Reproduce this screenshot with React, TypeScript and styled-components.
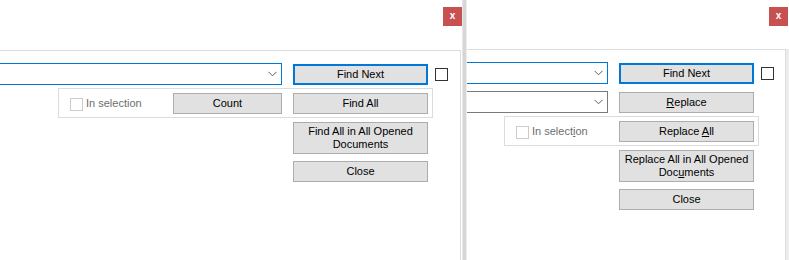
import React from "react";
import styled, { createGlobalStyle, css } from "styled-components";

const GlobalStyle = createGlobalStyle`
  html, body { margin: 0; padding: 0; background: #ffffff; }
  body {
    font-family: "Liberation Sans", Arial, sans-serif;
    font-size: 11px;
    color: #000;
  }
`;

const Page = styled.div`
  display: flex;
  width: 789px;
  height: 260px;
  background: #fff;
  overflow: hidden;
`;

const Panel = styled.div<{ $w?: number }>`
  display: flex;
  flex-direction: column;
  ${(p) => (p.$w ? css`width: ${p.$w}px; flex-shrink: 0;` : css`flex: 1; min-width: 0;`)}
  height: 100%;
`;

const TitleRow = styled.div<{ $h: number; $pr: number }>`
  height: ${(p) => p.$h}px;
  flex-shrink: 0;
  display: flex;
  justify-content: flex-end;
  align-items: flex-start;
  padding-right: ${(p) => p.$pr}px;
`;

const CloseX = styled.div`
  width: 19px;
  height: 19px;
  margin-top: 7px;
  background: #c75050;
  color: #fff;
  font-weight: bold;
  font-size: 10px;
  line-height: 18px;
  text-align: center;
`;

const Separator = styled.div`
  width: 5px;
  flex-shrink: 0;
  height: 100%;
  background: linear-gradient(
    to right,
    #e6e6e6 0 1px,
    #d6d6d6 1px 4px,
    #ececec 4px 5px
  );
`;

const Body = styled.div`
  flex: 1;
  display: flex;
  min-height: 0;
`;

const Strip = styled.div`
  width: 3px;
  flex-shrink: 0;
  background: #ececec;
`;

const Group = styled.div<{ $pr: number; $mr?: number }>`
  flex: 1;
  min-width: 0;
  display: flex;
  flex-direction: column;
  border-top: 1px solid #dcdcdc;
  border-right: 1px solid #dcdcdc;
  margin-right: ${(p) => p.$mr ?? 0}px;
  padding: 12px ${(p) => p.$pr}px 0 0;
  overflow: hidden;
`;

const Row = styled.div<{ $mt?: number }>`
  display: flex;
  align-items: flex-start;
  margin-top: ${(p) => p.$mt ?? 0}px;
`;

const Combo = styled.div<{ $active?: boolean }>`
  flex: 1;
  height: 22px;
  box-sizing: border-box;
  margin-left: -8px;
  border: 1px solid ${(p) => (p.$active ? "#0078d7" : "#7a7a7a")};
  background: #fff;
  display: flex;
  align-items: center;
  justify-content: flex-end;
  padding: 0 4px 1px 0;
`;

const Button = styled.button<{ $w?: number; $tall?: boolean; $focused?: boolean; $ml?: number | "auto"; $mt?: number }>`
  box-sizing: border-box;
  flex-shrink: 0;
  width: ${(p) => p.$w ?? 135}px;
  height: ${(p) => (p.$tall ? 32 : 21)}px;
  margin: 0;
  margin-left: ${(p) => (p.$ml === "auto" ? "auto" : `${p.$ml ?? 0}px`)};
  margin-top: ${(p) => p.$mt ?? 0}px;
  padding: 0;
  background: #e1e1e1;
  border: ${(p) => (p.$focused ? "2px solid #0078d7" : "1px solid #adadad")};
  font-family: "Liberation Sans", Arial, sans-serif;
  font-size: 11px;
  line-height: 13px;
  color: #000;
  text-align: center;
  cursor: default;
`;

const StackButton = styled(Button)`
  align-self: flex-end;
  margin-right: 20px;
`;

const Check = styled.span<{ $disabled?: boolean; $ml?: number; $mt?: number }>`
  display: block;
  flex-shrink: 0;
  box-sizing: border-box;
  width: 13px;
  height: 13px;
  margin-left: ${(p) => p.$ml ?? 0}px;
  margin-top: ${(p) => p.$mt ?? 0}px;
  border: 1px solid ${(p) => (p.$disabled ? "#cccccc" : "#333333")};
  background: #fff;
`;

const Label = styled.span<{ $disabled?: boolean }>`
  margin-left: 3px;
  line-height: 21px;
  white-space: nowrap;
  color: ${(p) => (p.$disabled ? "#6d6d6d" : "#000")};
`;

const InnerBox = styled.div<{ $w: number }>`
  box-sizing: border-box;
  align-self: flex-end;
  width: ${(p) => p.$w}px;
  height: 30px;
  margin: 3px 15px 0 0;
  border: 1px solid #dcdcdc;
  padding: 4px 4px 3px 11px;
  display: flex;
  align-items: flex-start;
`;

const Key = styled.span`
  text-decoration: underline;
  text-underline-offset: 1px;
`;

const Chevron = () => (
  <svg width="9" height="6" viewBox="0 0 9 6" aria-hidden="true">
    <polyline points="0.5,0.8 4.5,4.8 8.5,0.8" fill="none" stroke="#606060" strokeWidth="1" />
  </svg>
);

export default function App() {
  return (
    <>
      <GlobalStyle />
      <Page>
        <Panel $w={462}>
          <TitleRow $h={50} $pr={0}>
            <CloseX>x</CloseX>
          </TitleRow>
          <Group $pr={12} $mr={1}>
            <Row $mt={0}>
              <Combo $active>
                <Chevron />
              </Combo>
              <Button $focused $ml={11} $mt={1}>Find Next</Button>
              <Check $ml={7} $mt={5} />
            </Row>
            <InnerBox $w={375}>
              <Check $disabled $mt={5} />
              <Label $disabled>In selection</Label>
              <Button $w={109} $ml="auto">Count</Button>
              <Button $ml={11}>Find All</Button>
            </InnerBox>
            <StackButton $tall style={{ marginTop: 4 }}>
              Find All in All Opened
              <br />
              Documents
            </StackButton>
            <StackButton style={{ marginTop: 7 }}>Close</StackButton>
          </Group>
        </Panel>
        <Separator />
        <Panel>
          <TitleRow $h={49} $pr={1}>
            <CloseX>x</CloseX>
          </TitleRow>
          <Body>
            <Group $pr={11}>
              <Row>
                <Combo $active>
                  <Chevron />
                </Combo>
                <Button $focused $ml={11} $mt={1}>Find Next</Button>
                <Check $ml={7} $mt={5} />
              </Row>
              <Row $mt={7}>
                <Combo>
                  <Chevron />
                </Combo>
                <Button $ml={11} $mt={1}>
                  <Key>R</Key>eplace
                </Button>
                <Check $ml={7} style={{ visibility: "hidden" }} />
              </Row>
              <InnerBox $w={255}>
                <Check $disabled $mt={5} />
                <Label $disabled>
                  In select<Key>i</Key>on
                </Label>
                <Button $ml="auto">
                  Replace <Key>A</Key>ll
                </Button>
              </InnerBox>
              <StackButton $tall style={{ marginTop: 4 }}>
                Replace All in All Opened
                <br />
                Doc<Key>u</Key>ments
              </StackButton>
              <StackButton style={{ marginTop: 7 }}>Close</StackButton>
            </Group>
            <Strip />
          </Body>
        </Panel>
      </Page>
    </>
  );
}
